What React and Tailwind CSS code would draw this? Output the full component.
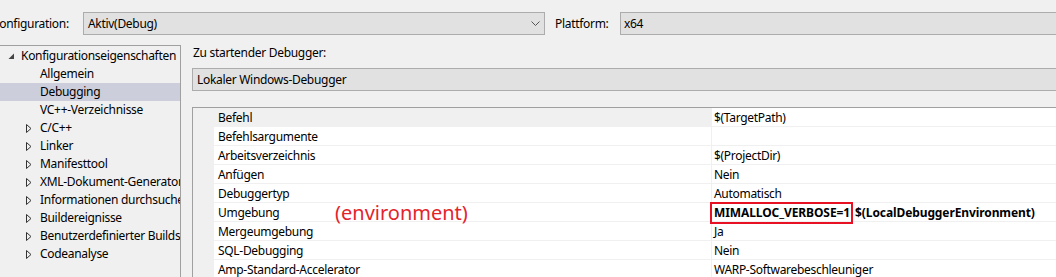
import React from "react";

const font = { fontFamily: '"Segoe UI", "Noto Sans", "Open Sans", sans-serif' };

function Collapsed() {
  return (
    <svg width="6" height="9" viewBox="0 0 6 9" className="shrink-0">
      <path d="M0.5 0.5 L5 4.5 L0.5 8.5 Z" fill="none" stroke="#333" strokeWidth="1" />
    </svg>
  );
}

function Expanded() {
  return (
    <svg width="7" height="7" viewBox="0 0 7 7" className="shrink-0">
      <path d="M6 0.5 L6 6 L0.5 6 Z" fill="#444" />
    </svg>
  );
}

const treeItems = [
  { label: "Konfigurationseigenschaften", level: 0, exp: true },
  { label: "Allgemein", level: 1 },
  { label: "Debugging", level: 1, sel: true },
  { label: "VC++-Verzeichnisse", level: 1 },
  { label: "C/C++", level: 1, col: true },
  { label: "Linker", level: 1, col: true },
  { label: "Manifesttool", level: 1, col: true },
  { label: "XML-Dokument-Generator", level: 1, col: true },
  { label: "Informationen durchsuchen", level: 1, col: true },
  { label: "Buildereignisse", level: 1, col: true },
  { label: "Benutzerdefinierter Buildschritt", level: 1, col: true },
  { label: "Codeanalyse", level: 1, col: true },
];

const rows = [
  ["Befehl", "$(TargetPath)"],
  ["Befehlsargumente", ""],
  ["Arbeitsverzeichnis", "$(ProjectDir)"],
  ["Anfügen", "Nein"],
  ["Debuggertyp", "Automatisch"],
  ["Umgebung", "ENV"],
  ["Mergeumgebung", "Ja"],
  ["SQL-Debugging", "Nein"],
  ["Amp-Standard-Accelerator", "WARP-Softwarebeschleuniger"],
  ["Extra", ""],
];

export default function App() {
  return (
    <div
      className="w-[1056px] h-[277px] overflow-hidden bg-[#f0f0f0] text-[12px] leading-[16px] tracking-[-0.3px] text-black"
      style={font}
    >
      {/* top configuration row */}
      <div className="flex items-center pt-[12px] h-[35px]">
        <div className="w-[87px] shrink-0 ml-[-8px] whitespace-nowrap">Configuration:</div>
        <div className="ml-[4px] w-[462px] h-[23px] border border-[#acacac] bg-[#e1e1e1] flex items-center pl-[4px] pr-[4px] justify-between">
          <span>Aktiv(Debug)</span>
          <svg width="9" height="6" viewBox="0 0 9 6">
            <path d="M0.5 0.5 L4.5 4.5 L8.5 0.5" fill="none" stroke="#555" strokeWidth="1" />
          </svg>
        </div>
        <div className="ml-[10px] w-[65px] whitespace-nowrap">Plattform:</div>
        <div className="flex-1 h-[23px] border border-[#acacac] border-r-0 bg-[#e1e1e1] flex items-center pl-[3px]">
          x64
        </div>
      </div>

      <div className="flex mt-[10px]">
        {/* tree panel */}
        <div className="w-[181px] shrink-0 h-[240px] border-t border-r border-[#a0a0a0] pt-[1px]">
          {treeItems.map((it, i) => (
            <div
              key={i}
              className={
                "h-[18px] flex items-center whitespace-nowrap overflow-hidden " +
                (it.sel ? "bg-[#cccedb]" : "")
              }
            >
              {it.level === 0 ? (
                <>
                  <div className="w-[8px] shrink-0" />
                  <Expanded />
                  <span className="ml-[6px]">{it.label}</span>
                </>
              ) : it.col ? (
                <>
                  <div className="w-[26px] shrink-0" />
                  <Collapsed />
                  <span className="ml-[8px]">{it.label}</span>
                </>
              ) : (
                <>
                  <div className="w-[40px] shrink-0" />
                  <span>{it.label}</span>
                </>
              )}
            </div>
          ))}
        </div>

        {/* right area */}
        <div className="flex-1 ml-[11px]">
          <div className="h-[16px] pl-[1px]">Zu startender Debugger:</div>
          <div className="mt-[7px] h-[23px] border border-[#acacac] border-r-0 bg-[#e1e1e1] flex items-center pl-[4px]">
            Lokaler Windows-Debugger
          </div>
          <div className="mt-[16px] border-t border-l border-[#a0a0a0] relative">
            {rows.map(([name, val], i) => (
              <div key={i} className="flex h-[19px]">
                <div className="w-[21px] shrink-0 bg-[#f0f0f0]" />
                <div
                  className={
                    "w-[498px] shrink-0 border-b border-r border-[#f0f0f0] pl-[4px] pt-[1px] flex items-center whitespace-nowrap " +
                    (i === 0 ? "bg-[#f0f0f0]" : "bg-white")
                  }
                >
                  {name}
                </div>
                <div className="flex-1 bg-white border-b border-[#f0f0f0] pl-[2px] pt-[1px] flex items-center whitespace-nowrap">
                  {val === "ENV" ? (
                    <span className="font-bold tracking-[-0.1px] flex items-center">
                      <span className="relative">
                        MIMALLOC_VERBOSE=1
                        <span className="absolute left-[-4px] right-[-3px] top-[-3px] bottom-[-3px] border-2 border-[#e81123]" />
                      </span>
                      <span className="ml-[5px]">$(LocalDebuggerEnvironment)</span>
                    </span>
                  ) : (
                    val
                  )}
                </div>
              </div>
            ))}
            <div className="absolute left-[142px] top-[93px] text-[20px] leading-[24px] tracking-normal text-[#e3242b] whitespace-nowrap">
              (environment)
            </div>
          </div>
        </div>
      </div>
    </div>
  );
}
